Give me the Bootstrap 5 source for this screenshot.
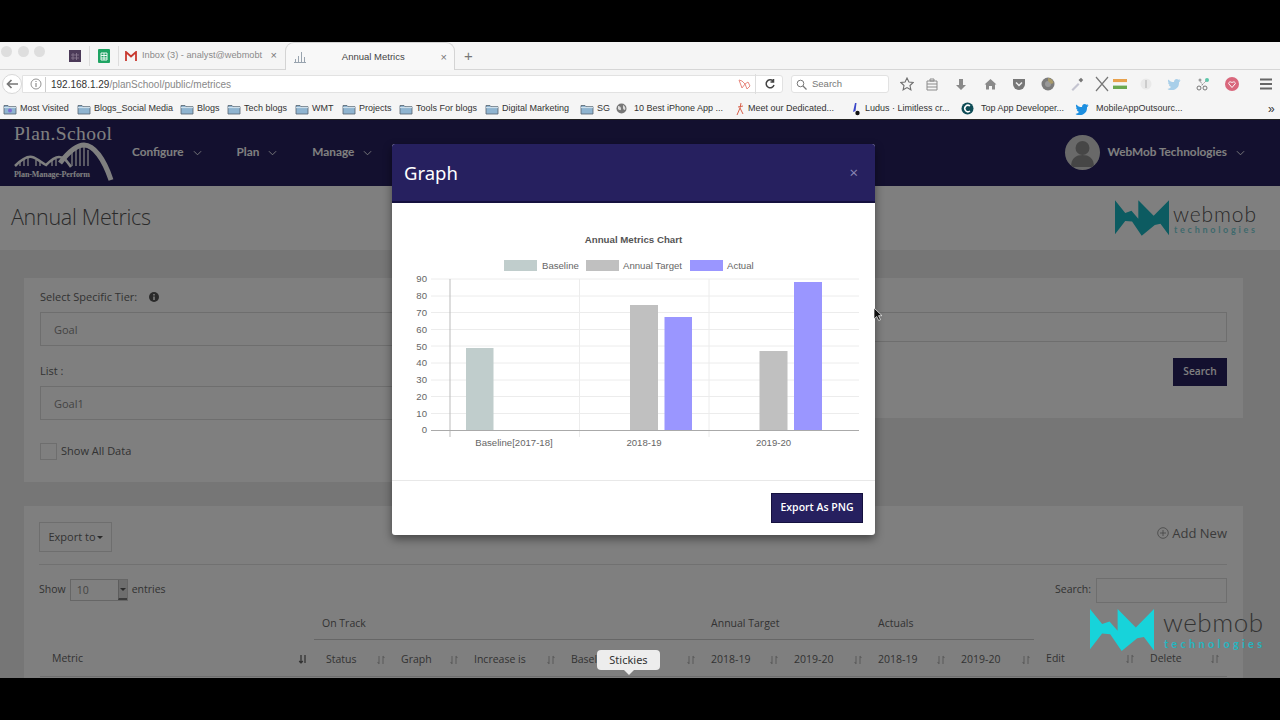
<!DOCTYPE html>
<html lang="en">
<head>
<meta charset="utf-8">
<title>Annual Metrics</title>
<link href="https://cdn.jsdelivr.net/npm/bootstrap@5.3.0/dist/css/bootstrap.min.css" rel="stylesheet">
<style>
html,body{height:720px;overflow:hidden;background:#000;margin:0}
body{font-family:"Open Sans",sans-serif;font-size:11px}
.letterbox{height:42px;background:#000}
.browser{height:78px;background:#f5f5f5;color:#555;font-family:"Liberation Sans",sans-serif}
.tabstrip{height:28px;border-bottom:1px solid #d6d6d6;position:relative}
.light-dot{width:11px;height:11px;border-radius:50%;background:#dedede}
.dots{width:61px;padding-left:1px;gap:5.5px;margin-top:-8px}
.tab-ico{width:28px;justify-content:center}
.tab-div{width:1px;height:20px;background:#ddd}
.mail-tab{width:157px;font-size:9.2px;color:#8a8a8a;padding:1px 0 0 5px;gap:5px;margin-left:1px}
.mail-tab span{flex:1;white-space:nowrap;overflow:hidden}
.tab-x{font-size:11px;color:#777;line-height:1}
.active-tab{width:170px;height:28px;margin-top:1px;background:#f8f8f8;border:1px solid #d4d4d4;border-bottom:0;border-radius:9px 9px 0 0;padding:1px 7px 0;font-size:9.500px;color:#444;margin-left:8px}
.active-tab .tab-title{flex:1;text-align:center;padding-right:1px}
.plus{font-size:15px;color:#777;margin-left:9px;line-height:1}
.urlrow{height:28px;padding:0 0 0 2px;gap:8px}
.back-ring{width:20px;height:20px;border-radius:50%;background:#fff;border:1px solid #d8d8d8;flex:none;z-index:1}
.urlfield{height:18px;width:761px;margin-left:-8px;background:#fff;border:1px solid #e2e2e2;border-radius:0 3px 3px 0;padding:0 6px 0 7px;flex:none}
.url-text{font-size:10px;color:#888;margin-left:3px;padding-left:5px;border-left:1px solid #ccc;flex:1}
.url-text b{font-weight:400;color:#333}
.searchfield{height:18px;width:98px;background:#fff;border:1px solid #e2e2e2;border-radius:3px;font-size:9.5px;color:#777;padding-left:4px;gap:5px;flex:none}
.tool-grid{display:grid;grid-template-columns:24px 26px 32px 26px 32px 26px 32px 18px 18px 34px 22px 36px 22px 37px;margin-left:-2px;align-items:center;justify-items:center;flex:none}
.tool-grid svg:last-child{justify-self:end;margin-right:7px}
.bookrow{height:22px;display:grid;grid-template-columns:74px 103px 47px 68px 47px 57px 86px 95px 36px 120px 115px 110px 114px 1fr 12px;padding-left:3px;align-items:center;font-size:9px;color:#333;white-space:nowrap;border-bottom:1px solid #222}
.bookrow>div{display:flex;align-items:center;gap:3px}
.more-mark{font-size:12px;line-height:1}
.stage{height:558px;position:relative;overflow:hidden;background:#ededed}
.appnav{height:66px;background:#26205f;color:#fff;padding:0 35px 2px 14px}
.logo-box{width:100px;height:60px}
.navlink{font-family:"Lato",sans-serif;font-weight:700;font-size:11.8px;color:#fff;text-decoration:none}
.navlink svg{margin-left:9px}
.navlist{margin-left:18px;gap:35px}
.user-ava{width:35px;height:35px;border-radius:50%;background:#d3d3d3;overflow:hidden}
.user-wrap{gap:7px}
.pagehead{height:64px;background:#fff;padding:0 24px 2px 11px}
.pagehead h1{font-family:"Open Sans",sans-serif;font-weight:300;font-size:21.5px;color:#555;margin:0;letter-spacing:-.3px}
.pagehead svg{margin-top:2px}
.form-zone{padding:28px 37px 0 24px;gap:0;height:256px}
.tile{background:#fff}
.tile-left{width:606px;height:204px;padding:12px 0 0 16px}
.tile-right{width:613px;height:140px;padding:34px 16px 0 15px}
.lbl{font-size:11px;color:#666;margin:0;line-height:14px;height:14px}
.fieldbox.form-control{height:34px;border:1px solid #dcdcdc;border-radius:0;background:transparent;font-size:11px;color:#888;padding:0 13px;box-shadow:none}
.tile-left .fieldbox{margin-top:8px}
.gap-label{margin-top:18px}
.tick-box{width:17px;height:17px;border:1px solid #ddd;display:block}
.check-row{margin-top:23px;gap:4px;color:#666;font-size:11px}
.right-field.form-control{height:30px}
.go-btn.btn{background:#26205f;border-color:#26205f;color:#fff;font-size:10.2px;font-weight:600;border-radius:0;padding:0;width:54px;height:28px;margin-top:16px}
.list-tile{height:200px;margin:0 37px 0 24px;padding:16px 16px 0 15px;background:#fff}
.export-btn.btn{width:73px;height:30px;border:1px solid #ddd;color:#666;font-size:11px;padding:0;border-radius:0;background:transparent}
.caret-mini{display:inline-block;border:3px solid transparent;border-top-color:#555;border-bottom:0;vertical-align:middle;margin-left:1px}
.add-new{font-size:13px;color:#777;gap:3px;align-self:flex-start;line-height:22px}
.rule-line{border-top:1px solid #e2e2e2;margin:12px 0 0}
.entry-row{height:42px;color:#666;padding-top:8px;font-size:10.5px}
.show-box{width:58px;height:22px;border:1px solid #ccc;padding-left:6px;color:#888;position:relative;line-height:20px}
.show-arrow{position:absolute;right:0;top:0;bottom:0;width:9px;background:#ddd;border-left:1px solid #bbb;border-bottom:2px solid #777;display:flex;align-items:center;justify-content:center}
.find-box{width:131px;height:25px;border:1px solid #ddd;margin-left:5px}
.grid-head.table{table-layout:fixed;width:1187px;margin:0 0 0 1px;--bs-table-bg:transparent;color:#666;font-size:10.5px}
.grid-head col:nth-child(1){width:274px}
.grid-head col:nth-child(2){width:75px}
.grid-head col:nth-child(3){width:73px}
.grid-head col:nth-child(4){width:97px}
.grid-head col:nth-child(5){width:140px}
.grid-head col:nth-child(6){width:83px}
.grid-head col:nth-child(7){width:84px}
.grid-head col:nth-child(8){width:83px}
.grid-head col:nth-child(9){width:85px}
.grid-head col:nth-child(10){width:104px}
.grid-head col:nth-child(11){width:89px}
.grid-head th{font-weight:400;padding:0 0 0 12px;vertical-align:middle;border:0;white-space:nowrap;overflow:hidden}
.grid-head tr:first-child th{height:32px;padding:2px 0 0 8px}
.grid-head tr:first-child th.has-rule{border-bottom:1px solid #ccc}
.grid-head tr:first-child th.pad-more{padding-left:12px}
.grid-head tr:last-child th{height:37px;border-bottom:1px solid #ddd;padding-top:4px}
.th-flex{display:flex;justify-content:space-between;align-items:center;padding-right:3px}
.grid-head th:first-child .th-flex{padding-right:6px}
.grid-head th:last-child .th-flex{padding-right:7px}
.veil{position:absolute;inset:0;background:#000;opacity:.5}
.graph-pop.modal-content{position:absolute;left:392px;top:24px;width:483px;height:391px;border:0;border-radius:3px;box-shadow:0 4px 10px rgba(0,0,0,.45);overflow:hidden;background:#fff}
.graph-pop .modal-header{height:59px;background:#26205f;color:#fff;border-radius:0;border-bottom:2px solid #15113f;padding:0 17px 0 12px}
.graph-pop .modal-title{font-family:"Noto Sans",sans-serif;font-size:18.5px;font-weight:400}
.closer{background:none;border:0;color:#8d89b5;font-size:15px;padding:0;line-height:1}
.graph-pop .modal-body{padding:0;height:277px}
.graph-pop .modal-body svg{display:block}
.graph-pop .modal-footer{height:55px;padding:0 12px;border-top:1px solid #e8e8e8;justify-content:flex-end;align-items:center;display:flex}
.png-btn.btn{background:#26205f;border:1px solid #15113f;border-radius:0;color:#fff;font-size:10.5px;font-weight:600;width:92px;height:30px;padding:0;margin:0}
.chart-t{font-family:"Liberation Sans",sans-serif;font-size:9.6px;fill:#666}
.chart-b{font-family:"Liberation Sans",sans-serif;font-size:9.7px;font-weight:700;fill:#555}
.pointer{position:absolute;left:873px;top:187px}
.sticky-tip{position:absolute;left:597px;top:530px;width:63px;height:20px;background:#ededed;border-radius:4px;color:#333;font-size:11px;text-align:center;line-height:20px;font-family:"Noto Sans",sans-serif}
.sticky-tip:after{content:"";position:absolute;left:27px;top:20px;border:5px solid transparent;border-top-color:#ededed;border-bottom:0}
.mark-over{position:absolute;left:1088px;top:486px}
</style>
</head>
<body>
<svg width="0" height="0" class="d-block position-absolute"><defs>
<symbol id="folder" viewBox="0 0 14 12"><path d="M1 2.5h4l1 1.2h7v7.3H1z" fill="#8fb4d0" stroke="#55636e" stroke-width=".8"/><path d="M1 4.6h12" stroke="#d5e4ee" stroke-width="1"/></symbol>
<symbol id="sorter" viewBox="0 0 10 10"><path d="M3 1v8M3 9 1.6 7M7 9V1M7 1l1.4 2" stroke="#bbb" stroke-width="1.1" fill="none"/></symbol>
<symbol id="sorter-on" viewBox="0 0 10 10"><path d="M3 1v8M3 9 1.2 7M3 9l1.800-2M7 9V1" stroke="#666" stroke-width="1.300" fill="none"/></symbol>
<symbol id="chev" viewBox="0 0 10 6"><path d="M1 1l4 4 4-4" stroke="currentColor" stroke-width="1" fill="none"/></symbol>
<symbol id="wm" viewBox="30 25 190 125"><polygon points="30,25 66,70 88,62 112,90 112,25 166,80 220,25 220,148 190,108 170,112 124,150 90,100 66,98 30,145"/></symbol>
</defs></svg>

<div class="letterbox"></div>

<div class="browser">
  <div class="tabstrip d-flex align-items-center">
    <div class="d-flex dots"><i class="light-dot"></i><i class="light-dot"></i><i class="light-dot"></i></div>
    <div class="tab-ico d-flex"><svg width="12" height="12"><rect width="12" height="12" fill="#4b3a58"/><path d="M4 3v7M7.5 3v7M2 5h8M2 8h8" stroke="#8c7b93" stroke-width=".8"/></svg></div>
    <div class="tab-div"></div>
    <div class="tab-ico d-flex"><svg width="12" height="14"><rect width="12" height="14" rx="1" fill="#1fa463"/><path d="M3 4h6v7H3zM3 6.5h6M3 9h6M6 4v7" stroke="#fff" stroke-width=".9" fill="none"/></svg></div>
    <div class="tab-div"></div>
    <div class="d-flex align-items-center mail-tab"><svg width="12" height="10" class="flex-none"><path d="M1 10V1l5 4.5L11 1v9" fill="none" stroke="#c8382e" stroke-width="1.8"/></svg><span>Inbox (3) - analyst@webmobt</span><i class="tab-x fst-normal">×</i></div>
    <div class="d-flex align-items-center active-tab"><svg width="14" height="12"><path d="M1 11.500h12M2.500 11V8M5.500 11V5M8.500 11V1M11.500 11V6" stroke="#8d9aa6" stroke-width=".9"/></svg><span class="tab-title">Annual Metrics</span><i class="tab-x fst-normal">×</i></div>
    <div class="plus">+</div>
  </div>
  <div class="urlrow d-flex align-items-center">
    <div class="back-ring d-flex align-items-center justify-content-center"><svg width="12" height="10"><path d="M5.500 1 1.500 5l4 4M2 5h10" stroke="#777" stroke-width="1.700" fill="none"/></svg></div>
    <div class="urlfield d-flex align-items-center">
      <svg width="12" height="12"><circle cx="6" cy="6" r="5" fill="none" stroke="#777" stroke-width=".8"/><path d="M6 5v4M6 3v1" stroke="#777"/></svg>
      <div class="url-text"><b>192.168.1.29</b>/planSchool/public/metrices</div>
      <svg width="13" height="11"><path d="M1 1l3 8 3-4 2 5 3-3-2-4-3 2-3-3z" fill="none" stroke="#e8897f" stroke-width="1"/></svg>
      <i class="tab-div me-2 ms-1"></i>
      <svg width="12" height="12"><path d="M10 7a4 4 0 1 1-1-4M9.500 1v3h-3" fill="none" stroke="#444" stroke-width="1.500"/></svg>
    </div>
    <div class="searchfield d-flex align-items-center"><svg width="11" height="11"><circle cx="4.500" cy="4.500" r="3.300" fill="none" stroke="#777"/><path d="M7 7l3.500 3.500" stroke="#777" stroke-width="1.200"/></svg>Search</div>
    <div class="tool-grid">
      <svg width="14" height="14"><path d="M7 1l1.900 4 4.300.5-3.200 3 .9 4.300L7 10.600l-3.900 2.200.9-4.300-3.200-3L5.100 5z" fill="none" stroke="#6f6f6f" stroke-width="1.100"/></svg>
      <svg width="12" height="13"><path d="M1 3h10v9H1zM1 6h10M1 9h10M4 1h4v2H4z" fill="none" stroke="#8b8b8b"/></svg>
      <svg width="12" height="13"><path d="M4 1h4v6h3l-5 5-5-5h3z" fill="#8a8a8a"/></svg>
      <svg width="13" height="12"><path d="M6.500 1 12.500 6.500H11V11.500H8V8H5v3.500H2V6.500H.5z" fill="#8a8a8a"/></svg>
      <svg width="14" height="12"><path d="M1 1h12v5a6 6 0 0 1-12 0z" fill="#777"/><path d="M4 4.500l3 3 3-3" stroke="#eee" stroke-width="1.500" fill="none"/></svg>
      <svg width="14" height="14"><circle cx="7" cy="7" r="6.500" fill="#7b7b7b"/><circle cx="7" cy="7" r="3" fill="#999"/><path d="M7 1a6 6 0 0 1 5.500 5L10 7 7 4z" fill="#a89a6a"/></svg>
      <svg width="14" height="14"><path d="M1.500 12.500 8 6l1.500 1.500L3 14z" fill="#c4c4d0"/><path d="M8.500 3 11 .8 13.200 3 11 5.500z" fill="#777"/></svg>
      <svg width="14" height="16"><path d="M1 1l12 14M13 1 1 15" stroke="#777" stroke-width="1.200"/></svg>
      <svg width="14" height="10"><rect width="14" height="3.300" fill="#e8a14c"/><rect y="3.300" width="14" height="3.300" fill="#f5f5f5"/><rect y="6.600" width="14" height="3.400" fill="#6aa84f"/></svg>
      <svg width="12" height="12"><circle cx="6" cy="6" r="5.500" fill="#e9e9e9"/><path d="M6 2v8" stroke="#ccc" stroke-width="2"/></svg>
      <svg width="14" height="12"><path d="M13.500 2c-.5.300-1 .4-1.500.5.500-.3 1-.8 1.100-1.400-.5.300-1 .5-1.600.6a2.600 2.600 0 0 0-4.400 2.300C4.500 4 2.600 3 1.300 1.400c-.7 1.200-.3 2.700.8 3.400-.4 0-.8-.1-1.100-.3 0 1.200.9 2.300 2.100 2.500-.4.100-.8.100-1.200 0 .3 1 1.300 1.800 2.400 1.800A5.200 5.200 0 0 1 .5 10.900 7.400 7.400 0 0 0 12 4.300c.6-.4 1.100-1.100 1.500-2.300z" fill="#a9cfe9"/></svg>
      <svg width="14" height="14"><circle cx="3" cy="11" r="2" fill="none" stroke="#777"/><circle cx="9" cy="11" r="2" fill="none" stroke="#777"/><circle cx="11" cy="3" r="2" fill="#5cc6a8"/><circle cx="4" cy="3" r="1.500" fill="#999"/><path d="M4 10 10 4M8 10 4 4" stroke="#888" stroke-dasharray="1.500 1"/></svg>
      <svg width="14" height="14"><circle cx="7" cy="7" r="7" fill="#d9677c"/><path d="M7 10.500 3.800 6.800c-.8-1.800 2.200-2.700 3.200-1 1-1.700 4-.8 3.200 1z" fill="none" stroke="#fff"/></svg>
      <svg width="14" height="12"><path d="M1 1.500h12M1 6h12M1 10.500h12" stroke="#666" stroke-width="1.800"/></svg>
    </div>
  </div>
  <div class="bookrow">
    <div><svg width="14" height="12"><use href="#folder"/><circle cx="7" cy="7.500" r="2" fill="#7f6fd0"/></svg>Most Visited</div>
    <div><svg width="14" height="12"><use href="#folder"/></svg>Blogs_Social Media</div>
    <div><svg width="14" height="12"><use href="#folder"/></svg>Blogs</div>
    <div><svg width="14" height="12"><use href="#folder"/></svg>Tech blogs</div>
    <div><svg width="14" height="12"><use href="#folder"/></svg>WMT</div>
    <div><svg width="14" height="12"><use href="#folder"/></svg>Projects</div>
    <div><svg width="14" height="12"><use href="#folder"/></svg>Tools For blogs</div>
    <div><svg width="14" height="12"><use href="#folder"/></svg>Digital Marketing</div>
    <div><svg width="14" height="12"><use href="#folder"/></svg>SG</div>
    <div><svg width="11" height="11"><circle cx="5.500" cy="5.500" r="5" fill="#777"/><path d="M2 3c2 0 3 1 3 3s-2 1-3 0zM7 2c2 1 3 3 2 5-1 0-2-1-2-2z" fill="#ddd"/></svg><span class="ms-1">10 Best iPhone App ...</span></div>
    <div><svg width="9" height="14"><path d="M5 1 4 6 1 13M4 6l3 6M2 5l5-1" stroke="#d8604a" stroke-width="1" fill="none"/></svg>Meet our Dedicated...</div>
    <div><svg width="11" height="14"><path d="M4 1 5.500 1 4.500 9 2 10z" fill="#3b47c9"/><circle cx="6.500" cy="11" r="2.200" fill="#111"/></svg>Ludus · Limitless cr...</div>
    <div><svg width="13" height="13"><circle cx="6.500" cy="6.500" r="6" fill="#0e4c56"/><path d="M9 4a3.200 3.200 0 1 0 0 5" fill="none" stroke="#fff" stroke-width="1.500"/></svg><span class="ms-1">Top App Developer...</span></div>
    <div><svg width="14" height="12"><path d="M13.500 2c-.5.300-1 .4-1.500.5.500-.3 1-.8 1.100-1.400-.5.300-1 .5-1.600.6a2.600 2.600 0 0 0-4.400 2.300C4.500 4 2.600 3 1.300 1.400c-.7 1.200-.3 2.700.8 3.400-.4 0-.8-.1-1.100-.3 0 1.200.9 2.300 2.100 2.500-.4.100-.8.100-1.200 0 .3 1 1.300 1.800 2.400 1.800A5.200 5.200 0 0 1 .5 10.900 7.400 7.400 0 0 0 12 4.300c.6-.4 1.100-1.100 1.500-2.300z" fill="#1d8fe0"/></svg><span class="ms-1">MobileAppOutsourc...</span></div>
    <div class="more-mark">»</div>
  </div>
</div>

<div class="stage">
  <nav class="appnav d-flex align-items-center">
    <div class="logo-box">
      <svg width="100" height="60" viewBox="14 122 100 60">
        <text x="14" y="140" font-family="Liberation Serif, serif" font-size="19.500" fill="#fff" textLength="98">Plan.School</text>
        <path d="M60 163C70 150 78 145 84 145c10 0 20 14 27 35" fill="none" stroke="#fff" stroke-width="5"/>
        <path d="M15 166c6-6 12-10 17-9s10 6 14 8c5-5 9-8 13-8 5 0 8 4 12 10" fill="none" stroke="#fff" stroke-width="2.500"/>
        <path d="M20 166v-5M24 166v-8M28 166v-8M36 166v-6M40 166v-5M52 166v-6M56 166v-7M72 166v-16M76 166v-18M80 166v-19M84 166v-19M88 166v-16" stroke="#fff" stroke-width="1.300"/>
        <text x="14" y="177" font-family="Liberation Serif, serif" font-weight="700" font-size="8" fill="#fff" textLength="76">Plan-Manage-Perform</text>
      </svg>
    </div>
    <div class="d-flex navlist">
      <a class="navlink" href="#">Configure<svg width="9" height="6"><use href="#chev"/></svg></a>
      <a class="navlink" href="#">Plan<svg width="9" height="6"><use href="#chev"/></svg></a>
      <a class="navlink" href="#">Manage<svg width="9" height="6"><use href="#chev"/></svg></a>
    </div>
    <div class="ms-auto d-flex align-items-center user-wrap">
      <div class="user-ava"><svg width="35" height="35"><circle cx="17.500" cy="13" r="7" fill="#8d8d8d"/><path d="M6 32c0-9 5-12 11.500-12S29 23 29 32z" fill="#8d8d8d"/></svg></div>
      <a class="navlink" href="#">WebMob Technologies<svg width="9" height="6"><use href="#chev"/></svg></a>
    </div>
  </nav>

  <header class="pagehead d-flex align-items-center justify-content-between">
    <h1>Annual Metrics</h1>
    <svg width="141" height="38" viewBox="1114 199 141 38">
      <use href="#wm" x="1114" y="200" width="54" height="36" fill="#18b7c2"/>
      <text x="1172" y="222" font-family="Lato, sans-serif" font-weight="300" font-size="21" fill="#555" textLength="83">webmob</text>
      <text x="1173" y="233" font-family="Lato, sans-serif" font-weight="700" font-size="9" fill="#7fd4da" textLength="81">technologies</text>
    </svg>
  </header>

  <section class="form-zone d-flex align-items-start">
    <div class="tile tile-left">
      <p class="lbl d-flex align-items-center gap-2">Select Specific Tier: <svg width="10" height="10" class="ms-1"><circle cx="5" cy="5" r="5" fill="#555"/><path d="M5 2v1.500M5 4.500V8" stroke="#fff" stroke-width="1.500"/></svg></p>
      <input class="form-control fieldbox" value="Goal" aria-label="tier">
      <p class="lbl gap-label">List :</p>
      <input class="form-control fieldbox" value="Goal1" aria-label="list">
      <div class="d-flex align-items-center check-row"><span class="tick-box"></span>Show All Data</div>
    </div>
    <div class="tile tile-right d-flex flex-column align-items-end">
      <input class="form-control fieldbox right-field" aria-label="extra">
      <button class="btn go-btn">Search</button>
    </div>
  </section>

  <section class="list-tile">
    <div class="d-flex justify-content-between align-items-center">
      <button class="btn export-btn">Export to<i class="caret-mini"></i></button>
      <div class="d-flex align-items-center add-new"><svg width="12" height="12"><circle cx="6" cy="6" r="5.300" fill="none" stroke="#888" stroke-width=".8"/><path d="M6 3v6M3 6h6" stroke="#888" stroke-width=".8"/></svg>Add New</div>
    </div>
    <div class="rule-line"></div>
    <div class="entry-row d-flex justify-content-between align-items-center">
      <div class="d-flex align-items-center">Show <span class="show-box mx-1">10<span class="show-arrow"><i class="caret-mini m-0"></i></span></span> entries</div>
      <div class="d-flex align-items-center">Search:<span class="find-box"></span></div>
    </div>
    <table class="table grid-head">
      <colgroup><col><col><col><col><col><col><col><col><col><col><col></colgroup>
      <thead>
        <tr><th></th><th colspan="4" class="has-rule">On Track</th><th colspan="2" class="has-rule pad-more">Annual Target</th><th colspan="2" class="has-rule pad-more">Actuals</th><th></th><th></th></tr>
        <tr>
          <th><div class="th-flex">Metric<svg width="10" height="10"><use href="#sorter-on"/></svg></div></th>
          <th><div class="th-flex">Status<svg width="10" height="10"><use href="#sorter"/></svg></div></th>
          <th><div class="th-flex">Graph<svg width="10" height="10"><use href="#sorter"/></svg></div></th>
          <th><div class="th-flex">Increase is<svg width="10" height="10"><use href="#sorter"/></svg></div></th>
          <th><div class="th-flex">Basel<svg width="10" height="10"><use href="#sorter"/></svg></div></th>
          <th><div class="th-flex">2018-19<svg width="10" height="10"><use href="#sorter"/></svg></div></th>
          <th><div class="th-flex">2019-20<svg width="10" height="10"><use href="#sorter"/></svg></div></th>
          <th><div class="th-flex">2018-19<svg width="10" height="10"><use href="#sorter"/></svg></div></th>
          <th><div class="th-flex">2019-20<svg width="10" height="10"><use href="#sorter"/></svg></div></th>
          <th><div class="th-flex">Edit<svg width="10" height="10"><use href="#sorter"/></svg></div></th>
          <th><div class="th-flex">Delete<svg width="10" height="10"><use href="#sorter"/></svg></div></th>
        </tr>
      </thead>
    </table>
  </section>

  <div class="veil"></div>

  <div class="modal-content graph-pop">
    <div class="modal-header d-flex justify-content-between align-items-center">
      <h5 class="modal-title">Graph</h5>
      <button class="closer" aria-label="Close">×</button>
    </div>
    <div class="modal-body">
      <svg width="483" height="277" viewBox="392 203 483 277">
        <text x="633.500" y="243" text-anchor="middle" class="chart-b">Annual Metrics Chart</text>
        <rect x="504" y="260" width="33" height="11" fill="#c0cdcc"/><text x="542" y="269" class="chart-t">Baseline</text>
        <rect x="586" y="260" width="33" height="11" fill="#c0c0c0"/><text x="623" y="269" class="chart-t">Annual Target</text>
        <rect x="690" y="260" width="33" height="11" fill="#9a96ff"/><text x="727" y="269" class="chart-t">Actual</text>
        <g stroke="#ececec" stroke-width="1">
          <path d="M431 279H859M431 296H859M431 312.500H859M431 329.500H859M431 346H859M431 363H859M431 380H859M431 396.500H859M431 413.500H859"/>
          <path d="M579.500 279V437M709 279V437"/>
        </g>
        <path d="M450 279V437" stroke="#bbb"/>
        <path d="M431 430.500H859" stroke="#aaa"/>
        <g class="chart-t" text-anchor="end">
          <text x="427" y="282">90</text><text x="427" y="299">80</text><text x="427" y="316">70</text><text x="427" y="333">60</text><text x="427" y="350">50</text><text x="427" y="366">40</text><text x="427" y="383">30</text><text x="427" y="400">20</text><text x="427" y="417">10</text><text x="427" y="433">0</text>
        </g>
        <rect x="466" y="348" width="27.500" height="82" fill="#c0cdcc"/>
        <rect x="630" y="305" width="28" height="125" fill="#c0c0c0"/>
        <rect x="664.500" y="317" width="27.500" height="113" fill="#9a96ff"/>
        <rect x="759.500" y="351" width="28" height="79" fill="#c0c0c0"/>
        <rect x="794" y="282" width="28" height="148" fill="#9a96ff"/>
        <g class="chart-t" text-anchor="middle">
          <text x="514" y="446">Baseline[2017-18]</text><text x="644" y="446">2018-19</text><text x="773.500" y="446">2019-20</text>
        </g>
      </svg>
    </div>
    <div class="modal-footer"><button class="btn png-btn">Export As PNG</button></div>
  </div>

  <svg class="pointer" width="10" height="15"><path d="M1 1v11l2.700-2.500 2 4 1.800-.8-2-4H9z" fill="#111" stroke="#fff" stroke-width=".7"/></svg>

  <div class="sticky-tip">Stickies</div>

  <svg class="mark-over" width="176" height="48" viewBox="1088 606 176 48">
    <use href="#wm" x="1090" y="608" width="64" height="44" fill="#17d3da"/>
    <text x="1163" y="632" font-family="Lato, sans-serif" font-weight="300" font-size="26" fill="#333" textLength="100">webmob</text>
    <text x="1164" y="648" font-family="Lato, sans-serif" font-weight="700" font-size="11" fill="#27b5c0" textLength="98">technologies</text>
  </svg>
</div>

<div class="letterbox"></div>
<script src="https://cdn.jsdelivr.net/npm/bootstrap@5.3.0/dist/js/bootstrap.bundle.min.js"></script>
</body>
</html>
